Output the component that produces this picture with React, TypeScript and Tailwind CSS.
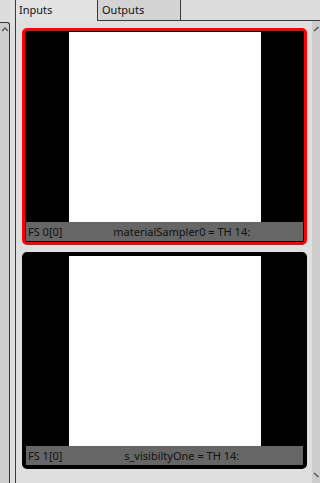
import React from "react";

const font = { fontFamily: '"Noto Sans", "DejaVu Sans", sans-serif' };

type Sampler = { slot: string; name: string; selected?: boolean };

const samplers: Sampler[] = [
  { slot: "FS 0[0]", name: "materialSampler0 = TH 14:", selected: true },
  { slot: "FS 1[0]", name: "s_visibiltyOne = TH 14:" },
];

function Thumb({ s }: { s: Sampler }) {
  return (
    <div
      className={`flex flex-col rounded-[5px] border-[3px] bg-black p-px ${
        s.selected ? "border-[#ff0000]" : "border-black"
      }`}
    >
      <div className="flex h-[190px] justify-center">
        <div className="w-[192px] bg-white" />
      </div>
      <div className="flex h-[19px] items-center bg-[#666666] px-[2px] text-[11px] leading-none text-[#111111]">
        <span>{s.slot}</span>
        <span className="flex-1 text-center">{s.name}</span>
      </div>
    </div>
  );
}

export default function App() {
  return (
    <div className="flex h-[483px] w-[320px] overflow-hidden bg-[#dfdfdf]" style={font}>
      {/* left panel scrollbar, cut off */}
      <div className="flex w-[10px] flex-col bg-[#dcdcdc]">
        <div className="h-[22px]" />
        <div className="flex flex-1 justify-center rounded-tr-[3px] border-r border-t border-[#3a3a3a] bg-[#cecece] pt-[3px]">
          <svg width="8" height="6" viewBox="0 0 8 6">
            <path d="M1 5 L4 2 L7 5" stroke="#555" strokeWidth="1.3" fill="none" />
          </svg>
        </div>
      </div>
      <div className="w-[5px]" />
      <div className="w-px bg-[#3a3a3a]" />

      <div className="flex flex-1 flex-col">
        {/* tabs */}
        <div className="flex h-[21px] items-stretch text-[11px] text-[#111111]">
          <div className="flex w-[81px] items-center bg-[#e2e2e2] pl-[3px]">Inputs</div>
          <div className="flex w-[84px] items-center border-x border-b border-[#3a3a3a] bg-[#d3d3d3] pl-[4px]">
            Outputs
          </div>
          <div className="flex-1 border-b border-[#3a3a3a] bg-[#dcdcdc]" />
        </div>

        {/* body */}
        <div className="flex flex-1">
          <div className="flex flex-1 flex-col gap-[7px] pl-[6px] pr-[5px] pt-[7px]">
            {samplers.map((s) => (
              <Thumb key={s.slot} s={s} />
            ))}
          </div>
          <div className="flex w-[8px] flex-col items-center justify-between bg-[#cccccc] py-[5px]">
            <svg width="7" height="6" viewBox="0 0 7 6">
              <path d="M1 5 L5.5 1" stroke="#555" strokeWidth="1.5" fill="none" />
            </svg>
            <svg width="7" height="6" viewBox="0 0 7 6">
              <path d="M1 1 L5.5 5" stroke="#555" strokeWidth="1.5" fill="none" />
            </svg>
          </div>
        </div>
      </div>
    </div>
  );
}
